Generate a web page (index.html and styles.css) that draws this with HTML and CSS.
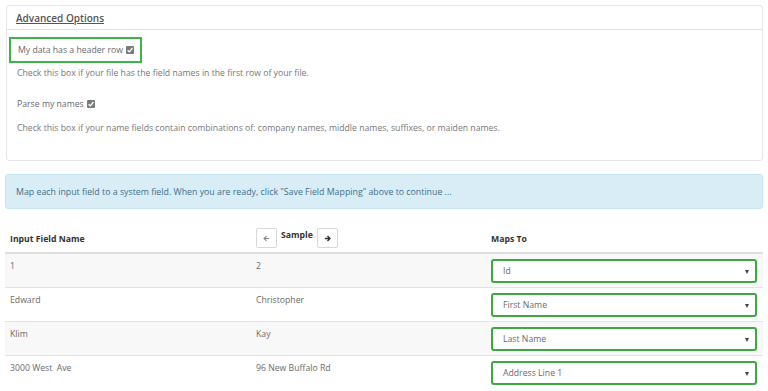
FILE: index.html
```html
<!DOCTYPE html>
<html>
<head>
<meta charset="utf-8">
<link rel="stylesheet" href="styles.css">
</head>
<body>
<div class="panel">
  <div class="panel-heading"><span class="panel-title">Advanced Options</span></div>
  <div class="panel-body">
    <div class="check-box-hl"><label class="check-label">My data has a header row <span class="cb"><svg viewBox="0 0 8 8" width="8" height="8"><rect x="0" y="0" width="8" height="8" rx="1" fill="#7a7a7a"/><path d="M1.6 4.2 L3.3 5.9 L6.5 2" stroke="#fff" stroke-width="1.3" fill="none"/></svg></span></label></div>
    <p class="help">Check this box if your file has the field names in the first row of your file.</p>
    <label class="check-label plain">Parse my names <span class="cb"><svg viewBox="0 0 8 8" width="8" height="8"><rect x="0" y="0" width="8" height="8" rx="1" fill="#7a7a7a"/><path d="M1.6 4.2 L3.3 5.9 L6.5 2" stroke="#fff" stroke-width="1.3" fill="none"/></svg></span></label>
    <p class="help">Check this box if your name fields contain combinations of: company names, middle names, suffixes, or maiden names.</p>
  </div>
</div>

<div class="alert">Map each input field to a system field. When you are ready, click "Save Field Mapping" above to continue ...</div>

<table class="map-table">
  <thead>
    <tr>
      <th class="c1">Input Field Name</th>
      <th class="c2"><div class="sample"><span class="nav-btn"><svg viewBox="0 0 10 10" width="9" height="9"><path d="M8 5 H2.5 M5 2.3 L2.3 5 L5 7.7" stroke="#8a8a8a" stroke-width="1.3" fill="none"/></svg></span><span class="sample-label">Sample</span><span class="nav-btn"><svg viewBox="0 0 10 10" width="9" height="9"><path d="M2 5 H7.5 M5 2.3 L7.7 5 L5 7.7" stroke="#333" stroke-width="1.6" fill="none"/></svg></span></div></th>
      <th class="c3">Maps To</th>
    </tr>
  </thead>
  <tbody>
    <tr><td>1</td><td>2</td><td><div class="select">Id<span class="caret"></span></div></td></tr>
    <tr><td>Edward</td><td>Christopher</td><td><div class="select">First Name<span class="caret"></span></div></td></tr>
    <tr><td>Klim</td><td>Kay</td><td><div class="select">Last Name<span class="caret"></span></div></td></tr>
    <tr><td>3000 West&nbsp; Ave</td><td>96 New Buffalo Rd</td><td><div class="select">Address Line 1<span class="caret"></span></div></td></tr>
  </tbody>
</table>
</body>
</html>
```

FILE: styles.css
```css
* { box-sizing: border-box; }
html, body { margin: 0; padding: 0; background: #fff; }
body {
  font-family: "Open Sans", "Noto Sans", sans-serif;
  font-size: 8.7px;
  color: #6f6f6f;
  width: 768px;
  height: 391px;
  overflow: hidden;
}
.panel {
  margin: 5px 5px 0 6px;
  height: 156px;
  border: 1px solid #e6e6e6;
  border-radius: 3px;
}
.panel-heading {
  height: 24px;
  padding: 0 9px;
  border-bottom: 1px solid #e2e2e2;
  display: flex;
  align-items: center;
}
.panel-title {
  font-size: 10px;
  font-weight: 600;
  color: #555;
  text-decoration: underline;
}
.panel-body { padding: 7px 2px 0 2px; }
.check-box-hl {
  display: inline-flex;
  align-items: center;
  height: 26px;
  padding: 0 6px 0 7px;
  border: 2px solid #3bb44a;
}
.check-label { display: inline-flex; align-items: center; color: #6a6a6a; }
.check-label.plain { padding-left: 8px; height: 16px; margin-top: 17px; }
.cb { display: inline-flex; margin-left: 3px; }
.help { margin: 0; padding-left: 8px; line-height: 12px; margin-top: 4px; color: #777; }
.panel-body .help:last-child { margin-top: 10px; }
.alert {
  margin: 13px 5px 0 5px;
  height: 35px;
  padding: 0 10px;
  display: flex;
  align-items: center;
  background: #d9edf7;
  border: 1px solid #c4e6f2;
  border-radius: 3px;
  color: #3f6f8c;
  font-size: 8.8px;
}
.map-table {
  margin: 12px 5px 0 5px;
  width: 758px;
  border-collapse: collapse;
}
.map-table th {
  text-align: left;
  font-weight: 700;
  color: #333;
  font-size: 8.7px;
  height: 32px;
  padding: 0 5px;
  vertical-align: bottom;
  padding-bottom: 7px;
  border-bottom: 2px solid #dedede;
}
.map-table th.c2 { padding-bottom: 4px; }
.map-table th.c1 { width: 246px; }
.map-table th.c2 { width: 235px; }
.sample { display: flex; align-items: flex-start; }
.sample-label { margin: 1px 4px 0 4px; }
.nav-btn {
  width: 21px; height: 20px;
  border: 1px solid #d8d8d8;
  border-radius: 2px;
  background: #fff;
  display: inline-flex; align-items: center; justify-content: center;
}
.map-table td {
  height: 34px;
  padding: 6px 5px 0 5px;
  vertical-align: top;
  border-top: 1px solid #e3e3e3;
  color: #6a6a6a;
}
.map-table tbody tr:first-child td { border-top: 0; }
.map-table tbody tr:nth-child(odd) td { background: #f8f8f8; }
.map-table td:last-child { padding: 5px 6px 0 5px; }
.select {
  position: relative;
  height: 24px;
  border: 2px solid #3da83f;
  border-radius: 3px;
  background: #fff;
  padding: 0 10px;
  display: flex; align-items: center;
  color: #6a6a6a;
}
.caret {
  position: absolute;
  right: 6px; top: 9px;
  width: 0; height: 0;
  border-left: 2.5px solid transparent;
  border-right: 2.5px solid transparent;
  border-top: 4px solid #444;
}
```
